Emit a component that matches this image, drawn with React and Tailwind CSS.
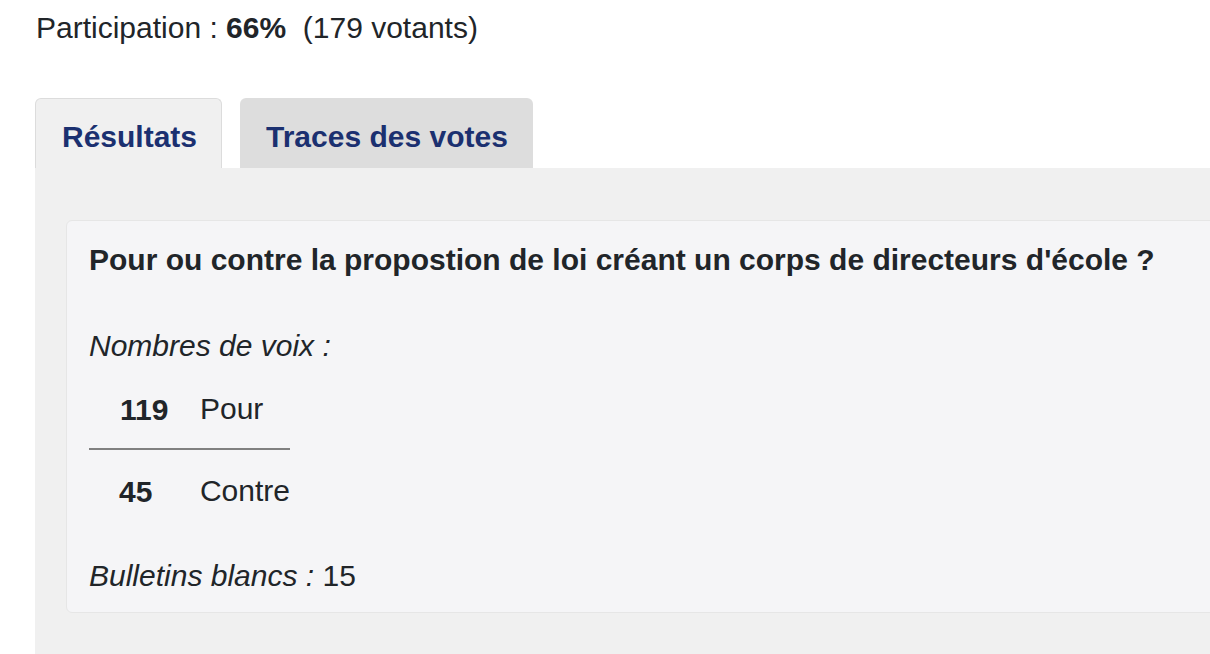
export default function App() {
  const font = { fontFamily: '"Liberation Sans", Arial, Helvetica, sans-serif' };
  return (
    <div className="w-[1210px] h-[654px] overflow-hidden bg-white text-[#212529]" style={font}>
      <div className="pl-[36px] pt-[10px] h-[46px] text-[30px] leading-[36px]">
        Participation : <b>66%</b>&nbsp; (179 votants)
      </div>
      <div className="pl-[35px] mt-[52px]">
        <div className="flex gap-[18px] h-[70px]">
          <div className="w-[187px] h-[70px] bg-[#f0f0f0] border border-b-0 border-[#dcdcdc] rounded-t-[6px] pl-[26px] flex items-center pt-[6px] text-[30px] font-bold text-[#1b3070]">
            Résultats
          </div>
          <div className="w-[293px] h-[70px] bg-[#dddddd] rounded-t-[6px] pl-[26px] flex items-center pt-[6px] text-[30px] font-bold text-[#1b3070]">
            Traces des votes
          </div>
        </div>
        <div className="w-[1260px] h-[500px] bg-[#f0f0f0] pl-[31px] pt-[52px]">
          <div className="w-[1220px] h-[393px] bg-[#f5f5f7] border border-[#e6e6e6] rounded-[6px] pl-[22px] pt-[21px]">
            <div className="text-[30px] leading-[36px] font-bold">
              Pour ou contre la propostion de loi créant un corps de directeurs d'école ?
            </div>
            <div className="mt-[50px] text-[30px] leading-[36px] italic">Nombres de voix :</div>
            <table className="mt-[5px] w-[201px] text-[30px] border-collapse">
              <tbody>
                <tr className="h-[80px] border-b-2 border-[#808080]">
                  <td className="pl-[31px] w-[111px] font-bold align-middle pt-[2px]">119</td>
                  <td className="align-middle">Pour</td>
                </tr>
                <tr className="h-[81px]">
                  <td className="pl-[30px] font-bold align-middle pt-[2px]">45</td>
                  <td className="align-middle">Contre</td>
                </tr>
              </tbody>
            </table>
            <div className="mt-[28px] text-[30px] leading-[36px]">
              <i>Bulletins blancs :</i> 15
            </div>
          </div>
        </div>
      </div>
    </div>
  );
}
